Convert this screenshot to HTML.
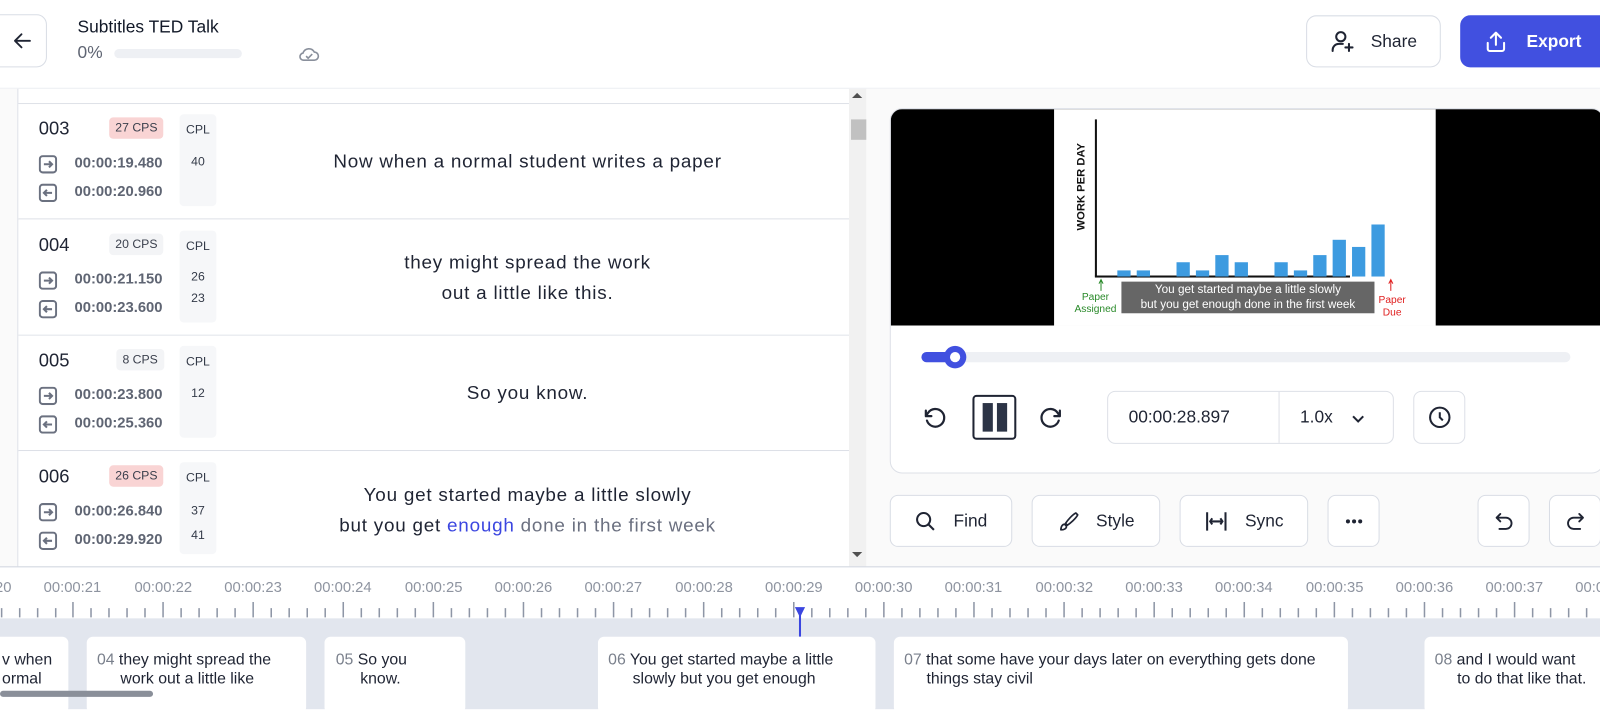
<!DOCTYPE html>
<html><head><style>
*{box-sizing:border-box;margin:0;padding:0}
body{width:1600px;height:695px;overflow:hidden;background:#fff;font-family:"Liberation Sans",sans-serif;color:#1f2433;position:relative}
#w{position:absolute;left:0;top:0;width:1568px;height:681px;transform:scale(1.0204);transform-origin:0 0}
.a{position:absolute}
.btn{position:absolute;border:1px solid #d9dde5;border-radius:8px;background:#fff;display:flex;align-items:center;justify-content:center;font-size:17px;color:#1f2433}
.row{position:absolute;left:18px;width:814px;height:113px;border-bottom:1px solid #dde0e7;background:#fff}
.num{position:absolute;left:20px;top:14px;font-size:18px;color:#1f2433}
.cps{position:absolute;top:13px;height:21px;border-radius:4px;font-size:12px;padding:0 6px;line-height:21px;color:#3a3f4c}
.red{background:#f9d4d4}.gray{background:#f3f4f6}
.cpl{position:absolute;left:158px;top:10px;width:36px;height:90px;background:#f6f7f9;border-radius:4px;font-size:12px;color:#333a48;text-align:center}
.tm{position:absolute;left:55px;font-size:14.5px;color:#5f6573;font-weight:bold}
.ic{position:absolute;left:20px}
.txt{position:absolute;left:184px;width:630px;text-align:center;font-size:18.5px;letter-spacing:.75px;line-height:30px;color:#1f2433}
.lbl{position:absolute;top:568px;font-size:14.5px;color:#8e94a0;width:90px;text-align:center}
.card{position:absolute;top:624px;height:75px;background:#fff;border-radius:6px;font-size:15.5px;line-height:19px;color:#1f2433;padding:13px 0 0 0}
.card i{font-style:normal;color:#7a808c;font-size:15.5px}
</style></head><body><div id="w">
<svg width="0" height="0" style="position:absolute"><defs>
<symbol id="in" viewBox="0 0 18 18"><rect x="1" y="1" width="16" height="16" rx="3" fill="none" stroke="#6b7180" stroke-width="2"/><path d="M5 9h8M10 6l3 3-3 3" fill="none" stroke="#6b7180" stroke-width="2"/></symbol>
<symbol id="out" viewBox="0 0 18 18"><rect x="1" y="1" width="16" height="16" rx="3" fill="none" stroke="#6b7180" stroke-width="2"/><path d="M13 9H5M8 6L5 9l3 3" fill="none" stroke="#6b7180" stroke-width="2"/></symbol>
</defs></svg>
<!-- header -->
<div class="btn" style="left:-10px;top:14px;width:56px;height:52px;border-radius:10px">
<svg width="22" height="22" viewBox="0 0 24 24" style="margin-left:8px"><path d="M20 12H5M11 5l-7 7 7 7" stroke="#1f2433" stroke-width="2" fill="none" stroke-linecap="round" stroke-linejoin="round"/></svg></div>
<div class="a" style="left:76px;top:17px;font-size:17px;color:#111827">Subtitles TED Talk</div>
<div class="a" style="left:76px;top:42px;font-size:17px;color:#5f6573">0%</div>
<div class="a" style="left:112px;top:48px;width:125px;height:9px;background:#eef0f4;border-radius:5px"></div>
<svg class="a" style="left:292px;top:44px" width="22" height="18" viewBox="0 0 22 18"><path d="M6 15h10a4 4 0 0 0 0-8 6 6 0 0 0-11 1 3.5 3.5 0 0 0 1 7z" fill="none" stroke="#8a909c" stroke-width="1.6"/><path d="M8 11l2 2 4-4" fill="none" stroke="#8a909c" stroke-width="1.6"/></svg>
<div class="btn" style="left:1280px;top:15px;width:132px;height:51px;border-radius:10px"><svg width="26" height="26" viewBox="0 0 26 26" style="margin-right:14px"><circle cx="11" cy="8" r="4.5" fill="none" stroke="#1f2433" stroke-width="2"/><path d="M3 22v-1a6 6 0 0 1 6-6h4M19 15v7M15.5 18.5h7" fill="none" stroke="#1f2433" stroke-width="2" stroke-linecap="round"/></svg>Share</div>
<div class="btn" style="left:1431px;top:15px;width:180px;height:51px;border-radius:10px;background:#4150e0;border-color:#4150e0;color:#fff;font-weight:bold;justify-content:flex-start;padding-left:22px"><svg width="24" height="24" viewBox="0 0 24 24" style="margin-right:18px"><path d="M4 13v6a2 2 0 0 0 2 2h12a2 2 0 0 0 2-2v-6M12 15V3M7 8l5-5 5 5" fill="none" stroke="#fff" stroke-width="2" stroke-linecap="round" stroke-linejoin="round"/></svg>Export</div>
<div class="a" style="left:0;top:86px;width:1600px;height:1px;background:#eceef2"></div>
<!-- left panel -->
<div class="a" style="left:0;top:87px;width:18px;height:468px;background:#fafafa;border-right:1px solid #dde0e7"></div>
<div class="a" style="left:18px;top:101px;width:814px;height:1px;background:#dde0e7"></div>
<div class="a" style="left:832px;top:87px;width:17px;height:468px;background:#f1f1f1"></div>
<div class="a" style="left:835px;top:91px;width:0;height:0;border-left:5px solid transparent;border-right:5px solid transparent;border-bottom:5px solid #505050"></div>
<div class="a" style="left:834px;top:117px;width:16px;height:20px;background:#c1c1c1"></div>
<div class="a" style="left:835px;top:541px;width:0;height:0;border-left:5px solid transparent;border-right:5px solid transparent;border-top:5px solid #505050"></div>

<div class="row" style="top:102px"><div class="num">003</div><div class="cps red" style="left:89px">27 CPS</div>
<div class="cpl"><div style="margin-top:8px">CPL</div><div style="margin-top:17px">40</div></div>
<svg class="ic" style="top:50px" width="18" height="18"><use href="#in"/></svg><div class="tm" style="top:50px">00:00:19.480</div>
<svg class="ic" style="top:78px" width="18" height="18"><use href="#out"/></svg><div class="tm" style="top:78px">00:00:20.960</div>
<div class="txt" style="top:41px">Now when a normal student writes a paper</div></div>

<div class="row" style="top:216px"><div class="num">004</div><div class="cps gray" style="left:89px">20 CPS</div>
<div class="cpl"><div style="margin-top:8px">CPL</div><div style="margin-top:13px;line-height:21px">26<br>23</div></div>
<svg class="ic" style="top:50px" width="18" height="18"><use href="#in"/></svg><div class="tm" style="top:50px">00:00:21.150</div>
<svg class="ic" style="top:78px" width="18" height="18"><use href="#out"/></svg><div class="tm" style="top:78px">00:00:23.600</div>
<div class="txt" style="top:26px">they might spread the work<br>out a little like this.</div></div>

<div class="row" style="top:329px"><div class="num">005</div><div class="cps gray" style="left:96px">8 CPS</div>
<div class="cpl"><div style="margin-top:8px">CPL</div><div style="margin-top:17px">12</div></div>
<svg class="ic" style="top:50px" width="18" height="18"><use href="#in"/></svg><div class="tm" style="top:50px">00:00:23.800</div>
<svg class="ic" style="top:78px" width="18" height="18"><use href="#out"/></svg><div class="tm" style="top:78px">00:00:25.360</div>
<div class="txt" style="top:41px">So you know.</div></div>

<div class="row" style="top:443px;border-bottom:none;height:112px"><div class="num">006</div><div class="cps red" style="left:89px">26 CPS</div>
<div class="cpl"><div style="margin-top:8px">CPL</div><div style="margin-top:13px;line-height:24px">37<br>41</div></div>
<svg class="ic" style="top:50px" width="18" height="18"><use href="#in"/></svg><div class="tm" style="top:50px">00:00:26.840</div>
<svg class="ic" style="top:78px" width="18" height="18"><use href="#out"/></svg><div class="tm" style="top:78px">00:00:29.920</div>
<div class="txt" style="top:27px">You get started maybe a little slowly<br>but you get <span style="color:#3b46e0">enough</span> <span style="color:#6b7080">done in the first week</span></div></div>

<!-- right panel -->
<div class="a" style="left:849px;top:87px;width:751px;height:468px;background:#fafafa"></div>
<div class="a" style="left:872px;top:106px;width:700px;height:358px;background:#fff;border:1px solid #dde0e7;border-radius:12px;overflow:hidden">
<div class="a" style="left:0;top:0;width:700px;height:212px;background:#000"></div>
<div class="a" style="left:160px;top:0;width:374px;height:212px;background:#fff">
<div class="a" style="left:40px;top:10px;width:2px;height:154px;background:#111"></div>
<div class="a" style="left:40px;top:163px;width:250px;height:2px;background:#111"></div>
<div class="a" style="left:-28px;top:70px;width:110px;transform:rotate(-90deg);font-size:11px;font-weight:bold;color:#111;text-align:center">WORK PER DAY</div>
<svg class="a" style="left:0;top:0" width="374" height="212">
<g fill="#3d9be0"><rect x="62" y="158" width="13" height="6"/><rect x="81" y="158" width="13" height="6"/><rect x="120" y="150" width="13" height="14"/><rect x="139" y="158" width="13" height="6"/><rect x="158" y="143" width="13" height="21"/><rect x="177" y="150" width="13" height="14"/><rect x="216" y="150" width="13" height="14"/><rect x="235" y="158" width="13" height="6"/><rect x="254" y="143" width="13" height="21"/><rect x="273" y="128" width="13" height="36"/><rect x="292" y="135" width="13" height="29"/><rect x="311" y="113" width="13" height="51"/></g>
<path d="M46 178v-10M44 171l2-4 2 4" stroke="#2a8a2a" fill="none"/><path d="M330 178v-10M328 171l2-4 2 4" stroke="#e02020" fill="none"/></svg>
<div class="a" style="left:20px;top:179px;font-size:10px;color:#2a8a2a;text-align:center;line-height:12px">Paper<br>Assigned</div>
<div class="a" style="left:318px;top:182px;font-size:10px;color:#e02020;text-align:center;line-height:12px">Paper<br>Due</div>
<div class="a" style="left:66px;top:169px;width:248px;height:31px;background:#666;color:#fff;font-size:11.5px;text-align:center;line-height:15px;padding-top:1px">You get started maybe a little slowly<br>but you get enough done in the first week</div>
</div>
<div class="a" style="left:30px;top:238px;width:636px;height:10px;background:#eef0f4;border-radius:5px"></div>
<div class="a" style="left:30px;top:238px;width:40px;height:10px;background:#4150e0;border-radius:5px"></div>
<div class="a" style="left:52px;top:232px;width:22px;height:22px;background:#4150e0;border-radius:50%"><div style="margin:6px;width:10px;height:10px;background:#fff;border-radius:50%"></div></div>
<svg class="a" style="left:30px;top:290px" width="26" height="26" viewBox="0 0 24 24"><path d="M4 5v5h5M5 14a8 8 0 1 0 1-7l-2 3" fill="none" stroke="#1f2433" stroke-width="2" stroke-linecap="round" stroke-linejoin="round"/></svg>
<div class="a" style="left:80px;top:280px;width:43px;height:44px;border:2px solid #1f2433;border-radius:4px"><div class="a" style="left:8px;top:6px;width:10px;height:28px;background:#2c3446"></div><div class="a" style="left:22px;top:6px;width:10px;height:28px;background:#2c3446"></div></div>
<svg class="a" style="left:144px;top:290px" width="26" height="26" viewBox="0 0 24 24"><path d="M20 5v5h-5M19 14a8 8 0 1 1-1-7l2 3" fill="none" stroke="#1f2433" stroke-width="2" stroke-linecap="round" stroke-linejoin="round"/></svg>
<div class="a" style="left:212px;top:276px;width:281px;height:52px;border:1px solid #dde0e7;border-radius:8px;font-size:17px">
<div class="a" style="left:20px;top:15px">00:00:28.897</div><div class="a" style="left:167px;top:0;width:1px;height:50px;background:#dde0e7"></div>
<div class="a" style="left:188px;top:15px">1.0x</div>
<svg class="a" style="left:236px;top:17px" width="18" height="18" viewBox="0 0 18 18"><path d="M4 7l5 5 5-5" fill="none" stroke="#1f2433" stroke-width="2"/></svg></div>
<div class="a" style="left:512px;top:276px;width:51px;height:52px;border:1px solid #dde0e7;border-radius:8px"><svg style="margin:13px" width="24" height="24" viewBox="0 0 24 24"><circle cx="12" cy="12" r="9.5" fill="none" stroke="#1f2433" stroke-width="2"/><path d="M12 7v5l3 3" fill="none" stroke="#1f2433" stroke-width="2"/></svg></div>
</div>
<div class="btn" style="left:872px;top:485px;width:120px;height:51px"><svg width="22" height="22" viewBox="0 0 24 24" style="margin-right:16px"><circle cx="10" cy="10" r="7" fill="none" stroke="#1f2433" stroke-width="2.2"/><path d="M15 15l6 6" stroke="#1f2433" stroke-width="2.2"/></svg>Find</div>
<div class="btn" style="left:1011px;top:485px;width:126px;height:51px"><svg width="22" height="22" viewBox="0 0 24 24" style="margin-right:16px"><path d="M20 3c-4 2-9 8-11 11l2 2c3-2 9-7 11-11zM8 15c-2 0-4 2-4 6 3 0 6-1 6-4z" fill="none" stroke="#1f2433" stroke-width="1.8" stroke-linejoin="round"/></svg>Style</div>
<div class="btn" style="left:1156px;top:485px;width:126px;height:51px"><svg width="24" height="22" viewBox="0 0 24 22" style="margin-right:16px"><path d="M3 2v18M21 2v18M6 11h12M8 8l-2 3 2 3M16 8l2 3-2 3" fill="none" stroke="#1f2433" stroke-width="2"/></svg>Sync</div>
<div class="btn" style="left:1301px;top:485px;width:51px;height:51px"><svg width="20" height="6" viewBox="0 0 20 6"><circle cx="4" cy="3" r="2" fill="#1f2433"/><circle cx="10" cy="3" r="2" fill="#1f2433"/><circle cx="16" cy="3" r="2" fill="#1f2433"/></svg></div>
<div class="btn" style="left:1448px;top:485px;width:51px;height:51px"><svg width="22" height="22" viewBox="0 0 24 24"><path d="M8 4L4 8l4 4M4 8h10a6 6 0 0 1 0 12H7" fill="none" stroke="#1f2433" stroke-width="2" stroke-linecap="round" stroke-linejoin="round"/></svg></div>
<div class="btn" style="left:1518px;top:485px;width:51px;height:51px"><svg width="22" height="22" viewBox="0 0 24 24"><path d="M16 4l4 4-4 4M20 8H10a6 6 0 0 0 0 12h7" fill="none" stroke="#1f2433" stroke-width="2" stroke-linecap="round" stroke-linejoin="round"/></svg></div>

<!-- timeline -->
<div class="a" style="left:0;top:555px;width:1600px;height:1px;background:#cfd4de"></div>
<div class="a" style="left:0;top:606px;width:1600px;height:89px;background:#e2e6ee"></div>
<svg class="a" style="left:0;top:585px" width="1600" height="22">
<g stroke="#8e96a6" stroke-width="1.5">
<path d="M-16.8 5v15M1.6 11v9M19.3 11v9M36.9 11v9M54.6 11v9M71.5 5v15M89.2 11v9M106.8 11v9M124.5 11v9M142.1 11v9M159.8 5v15M177.5 11v9M195.1 11v9M212.8 11v9M230.4 11v9M248.1 5v15M265.8 11v9M283.4 11v9M301.1 11v9M318.7 11v9M336.4 5v15M354.1 11v9M371.7 11v9M389.4 11v9M407 11v9M424.7 5v15M442.4 11v9M460 11v9M477.7 11v9M495.3 11v9M513 5v15M530.7 11v9M548.3 11v9M566 11v9M583.6 11v9M601.3 5v15M619 11v9M636.6 11v9M654.3 11v9M671.9 11v9M689.6 5v15M707.3 11v9M724.9 11v9M742.6 11v9M760.2 11v9M777.9 5v15M795.6 11v9M813.2 11v9M830.9 11v9M848.5 11v9M866.2 5v15M883.9 11v9M901.5 11v9M919.2 11v9M936.8 11v9M954.5 5v15M972.2 11v9M989.8 11v9M1007.5 11v9M1025.1 11v9M1042.8 5v15M1060.5 11v9M1078.1 11v9M1095.8 11v9M1113.4 11v9M1131.1 5v15M1148.8 11v9M1166.4 11v9M1184.1 11v9M1201.7 11v9M1219.4 5v15M1237.1 11v9M1254.7 11v9M1272.4 11v9M1290 11v9M1307.7 5v15M1325.4 11v9M1343 11v9M1360.7 11v9M1378.3 11v9M1396 5v15M1413.7 11v9M1431.3 11v9M1449 11v9M1466.6 11v9M1484.3 5v15M1502 11v9M1519.6 11v9M1537.3 11v9M1554.9 11v9M1572.6 5v15M1590.3 11v9"/></g></svg>
<div class="lbl" style="left:-62px">00:00:20</div><div class="lbl" style="left:26px">00:00:21</div><div class="lbl" style="left:115px">00:00:22</div><div class="lbl" style="left:203px">00:00:23</div><div class="lbl" style="left:291px">00:00:24</div><div class="lbl" style="left:380px">00:00:25</div><div class="lbl" style="left:468px">00:00:26</div><div class="lbl" style="left:556px">00:00:27</div><div class="lbl" style="left:645px">00:00:28</div><div class="lbl" style="left:733px">00:00:29</div><div class="lbl" style="left:821px">00:00:30</div><div class="lbl" style="left:909px">00:00:31</div><div class="lbl" style="left:998px">00:00:32</div><div class="lbl" style="left:1086px">00:00:33</div><div class="lbl" style="left:1174px">00:00:34</div><div class="lbl" style="left:1263px">00:00:35</div><div class="lbl" style="left:1351px">00:00:36</div><div class="lbl" style="left:1439px">00:00:37</div><div class="lbl" style="left:1527px">00:00:38</div>
<div class="a" style="left:783px;top:596px;width:2px;height:28px;background:#3b46e0"></div>
<div class="a" style="left:779px;top:595px;width:0;height:0;border-left:5px solid transparent;border-right:5px solid transparent;border-top:10px solid #3b46e0"></div>

<div class="card" style="left:-40px;width:107px;padding-left:42px">v when<br>ormal</div>
<div class="card" style="left:85px;width:215px;padding-left:10px"><i>04</i> they might spread the<br><span style="padding-left:23px">work out a little like</span></div>
<div class="card" style="left:318px;width:138px;padding-left:11px"><i>05</i> So you<br><span style="padding-left:24px">know.</span></div>
<div class="card" style="left:586px;width:272px;padding-left:10px"><i>06</i> You get started maybe a little<br><span style="padding-left:24px">slowly but you get enough</span></div>
<div class="card" style="left:876px;width:445px;padding-left:10px"><i>07</i> that some have your days later on everything gets done<br><span style="padding-left:22px">things stay civil</span></div>
<div class="card" style="left:1396px;width:220px;padding-left:10px"><i>08</i> and I would want<br><span style="padding-left:22px">to do that like that.</span></div>
<div class="a" style="left:0;top:677px;width:150px;height:6px;background:#8a8f99;border-radius:4px"></div>
</div></body></html>
